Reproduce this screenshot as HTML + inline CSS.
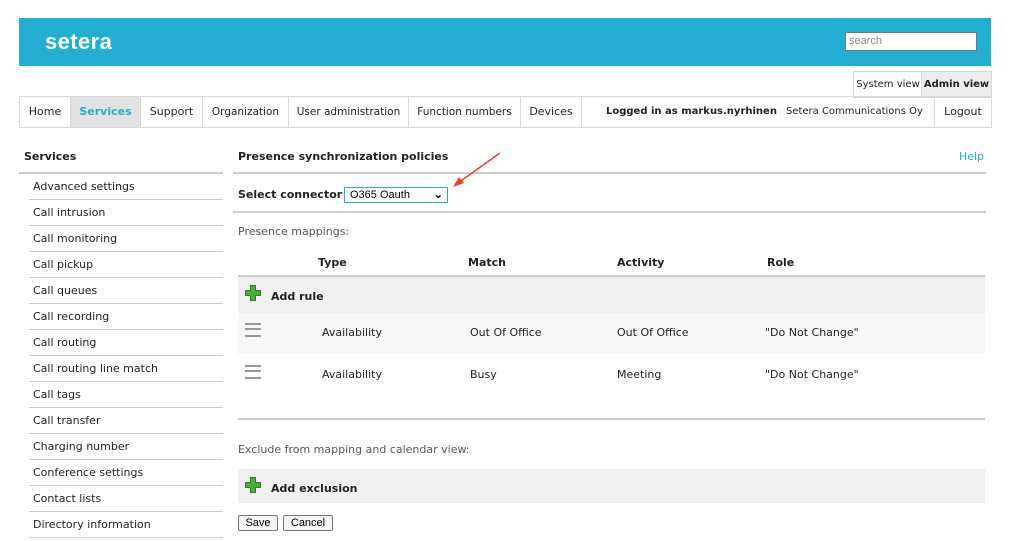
<!DOCTYPE html>
<html><head><style>
body{margin:0;width:1033px;height:541px;position:relative;background:#fff;font-family:"DejaVu Sans",Verdana,sans-serif;font-size:11px;color:#222;overflow:hidden}
.a{position:absolute;white-space:nowrap}
.b{font-weight:bold}
.hdr{left:19px;top:18px;width:972px;height:48px;background:#24aed2}
.tab{position:absolute;top:96px;height:30px;line-height:30px;border:1px solid #d8d8d8;border-right:none;text-align:center;font-size:11px;white-space:nowrap;overflow:hidden}
.si{position:absolute;left:33px;font-size:11px}
.sl{position:absolute;left:29px;width:194px;height:1px;background:#ccc}
.plus{position:absolute;width:16px;height:16px}
.ham{position:absolute;width:16px;height:10px;border-top:2px solid #999;}
</style></head><body>
<div class="a hdr"></div>
<div class="a" style="left:45px;top:29px;font-family:'Liberation Sans',sans-serif;font-size:22px;font-weight:bold;color:#fff;letter-spacing:0.4px">setera</div>
<div class="a" style="left:845px;top:32px;width:132px;height:19px;background:#fff;border:1px solid #777;box-sizing:border-box;color:#888;font-family:'Liberation Sans',sans-serif;font-size:11px;line-height:17px;padding-left:3px">search</div>

<div class="a" style="left:853px;top:71px;width:68px;height:25px;border:1px solid #d8d8d8;line-height:25px;text-align:center;font-size:10px">System view</div>
<div class="a b" style="left:921px;top:71px;width:69px;height:25px;border:1px solid #d8d8d8;background:#ececec;line-height:25px;text-align:center;font-size:10px">Admin view</div>

<div class="tab" style="left:19px;width:50px">Home</div>
<div class="tab b" style="left:70px;width:69px;background:#e2e2e2;color:#24aed2">Services</div>
<div class="tab" style="left:140px;width:61px">Support</div>
<div class="tab" style="left:202px;width:85px;font-size:10.5px">Organization</div>
<div class="tab" style="left:288px;width:119px;font-size:10.5px">User administration</div>
<div class="tab" style="left:408px;width:111px;font-size:10.5px">Function numbers</div>
<div class="tab" style="left:520px;width:60px">Devices</div>
<div class="tab" style="left:581px;width:352px;text-align:left;font-size:10px"><span class="b" style="margin-left:24px">Logged in as markus.nyrhinen</span><span style="margin-left:9px">Setera Communications Oy</span></div>
<div class="tab" style="left:934px;width:56px;border-right:1px solid #d8d8d8">Logout</div>

<div class="a b" style="left:24px;top:150px">Services</div>
<div class="a" style="left:19px;top:172px;width:204px;height:2px;background:#ccc"></div>
<div class="si" style="top:180px">Advanced settings</div><div class="sl" style="top:199px"></div>
<div class="si" style="top:206px">Call intrusion</div><div class="sl" style="top:225px"></div>
<div class="si" style="top:232px">Call monitoring</div><div class="sl" style="top:251px"></div>
<div class="si" style="top:258px">Call pickup</div><div class="sl" style="top:277px"></div>
<div class="si" style="top:284px">Call queues</div><div class="sl" style="top:303px"></div>
<div class="si" style="top:310px">Call recording</div><div class="sl" style="top:329px"></div>
<div class="si" style="top:336px">Call routing</div><div class="sl" style="top:355px"></div>
<div class="si" style="top:362px">Call routing line match</div><div class="sl" style="top:381px"></div>
<div class="si" style="top:388px">Call tags</div><div class="sl" style="top:407px"></div>
<div class="si" style="top:414px">Call transfer</div><div class="sl" style="top:433px"></div>
<div class="si" style="top:440px">Charging number</div><div class="sl" style="top:459px"></div>
<div class="si" style="top:466px">Conference settings</div><div class="sl" style="top:485px"></div>
<div class="si" style="top:492px">Contact lists</div><div class="sl" style="top:511px"></div>
<div class="si" style="top:518px">Directory information</div><div class="sl" style="top:537px"></div>

<div class="a b" style="left:238px;top:150px">Presence synchronization policies</div>
<div class="a" style="left:959px;top:150px;color:#24aed2">Help</div>
<div class="a" style="left:233px;top:172px;width:753px;height:2px;background:#ccc"></div>
<svg class="a" style="left:450px;top:150px" width="55" height="40"><line x1="50" y1="3" x2="8" y2="33" stroke="#e8402a" stroke-width="1.5"/><polygon points="3,37 9,27 14,33" fill="#e8402a"/></svg>
<div class="a b" style="left:238px;top:188px">Select connector</div>
<div class="a" style="left:344px;top:187px;width:104px;height:16px;border:1px solid #24aed2;box-sizing:border-box;font-family:'Liberation Sans',sans-serif;font-size:11px;line-height:14px;padding-left:5px;color:#000">O365 Oauth<span style="position:absolute;right:4px;top:0;font-weight:bold">&#8964;</span></div>
<div class="a" style="left:233px;top:211px;width:753px;height:2px;background:#ccc"></div>
<div class="a" style="left:238px;top:225px;color:#555">Presence mappings:</div>

<div class="a b" style="left:318px;top:256px">Type</div>
<div class="a b" style="left:468px;top:256px">Match</div>
<div class="a b" style="left:617px;top:256px">Activity</div>
<div class="a b" style="left:767px;top:256px">Role</div>
<div class="a" style="left:238px;top:275px;width:747px;height:2px;background:#ccc"></div>
<div class="a" style="left:238px;top:277px;width:747px;height:36px;background:#f0f0f0"></div>
<svg class="plus" style="left:245px;top:285px" viewBox="0 0 16 16"><path d="M5.5 0.5h5v5h5v5h-5v5h-5v-5h-5v-5h5z" fill="#4cae3c" stroke="#2e7d24"/></svg>
<div class="a b" style="left:271px;top:290px">Add rule</div>
<div class="a" style="left:238px;top:313px;width:747px;height:41px;background:#f7f7f7"></div>
<div class="ham" style="left:245px;top:323px;border-bottom:2px solid #999"><div style="margin-top:3px;height:2px;background:#999"></div></div>
<div class="a" style="left:322px;top:326px">Availability</div>
<div class="a" style="left:470px;top:326px">Out Of Office</div>
<div class="a" style="left:617px;top:326px">Out Of Office</div>
<div class="a" style="left:765px;top:326px">"Do Not Change"</div>
<div class="ham" style="left:245px;top:365px;border-bottom:2px solid #999"><div style="margin-top:3px;height:2px;background:#999"></div></div>
<div class="a" style="left:322px;top:368px">Availability</div>
<div class="a" style="left:470px;top:368px">Busy</div>
<div class="a" style="left:617px;top:368px">Meeting</div>
<div class="a" style="left:765px;top:368px">"Do Not Change"</div>
<div class="a" style="left:238px;top:418px;width:747px;height:2px;background:#ccc"></div>
<div class="a" style="left:238px;top:443px;color:#555">Exclude from mapping and calendar view:</div>
<div class="a" style="left:238px;top:469px;width:747px;height:34px;background:#f0f0f0"></div>
<svg class="plus" style="left:245px;top:477px" viewBox="0 0 16 16"><path d="M5.5 0.5h5v5h5v5h-5v5h-5v-5h-5v-5h5z" fill="#4cae3c" stroke="#2e7d24"/></svg>
<div class="a b" style="left:271px;top:482px">Add exclusion</div>
<div class="a" style="left:238px;top:515px;width:40px;height:16px;border:1px solid #777;border-radius:2px;background:#f4f4f4;box-sizing:border-box;text-align:center;line-height:14px;font-family:'Liberation Sans',sans-serif;font-size:11px;color:#000">Save</div>
<div class="a" style="left:283px;top:515px;width:50px;height:16px;border:1px solid #777;border-radius:2px;background:#f4f4f4;box-sizing:border-box;text-align:center;line-height:14px;font-family:'Liberation Sans',sans-serif;font-size:11px;color:#000">Cancel</div>
</body></html>
